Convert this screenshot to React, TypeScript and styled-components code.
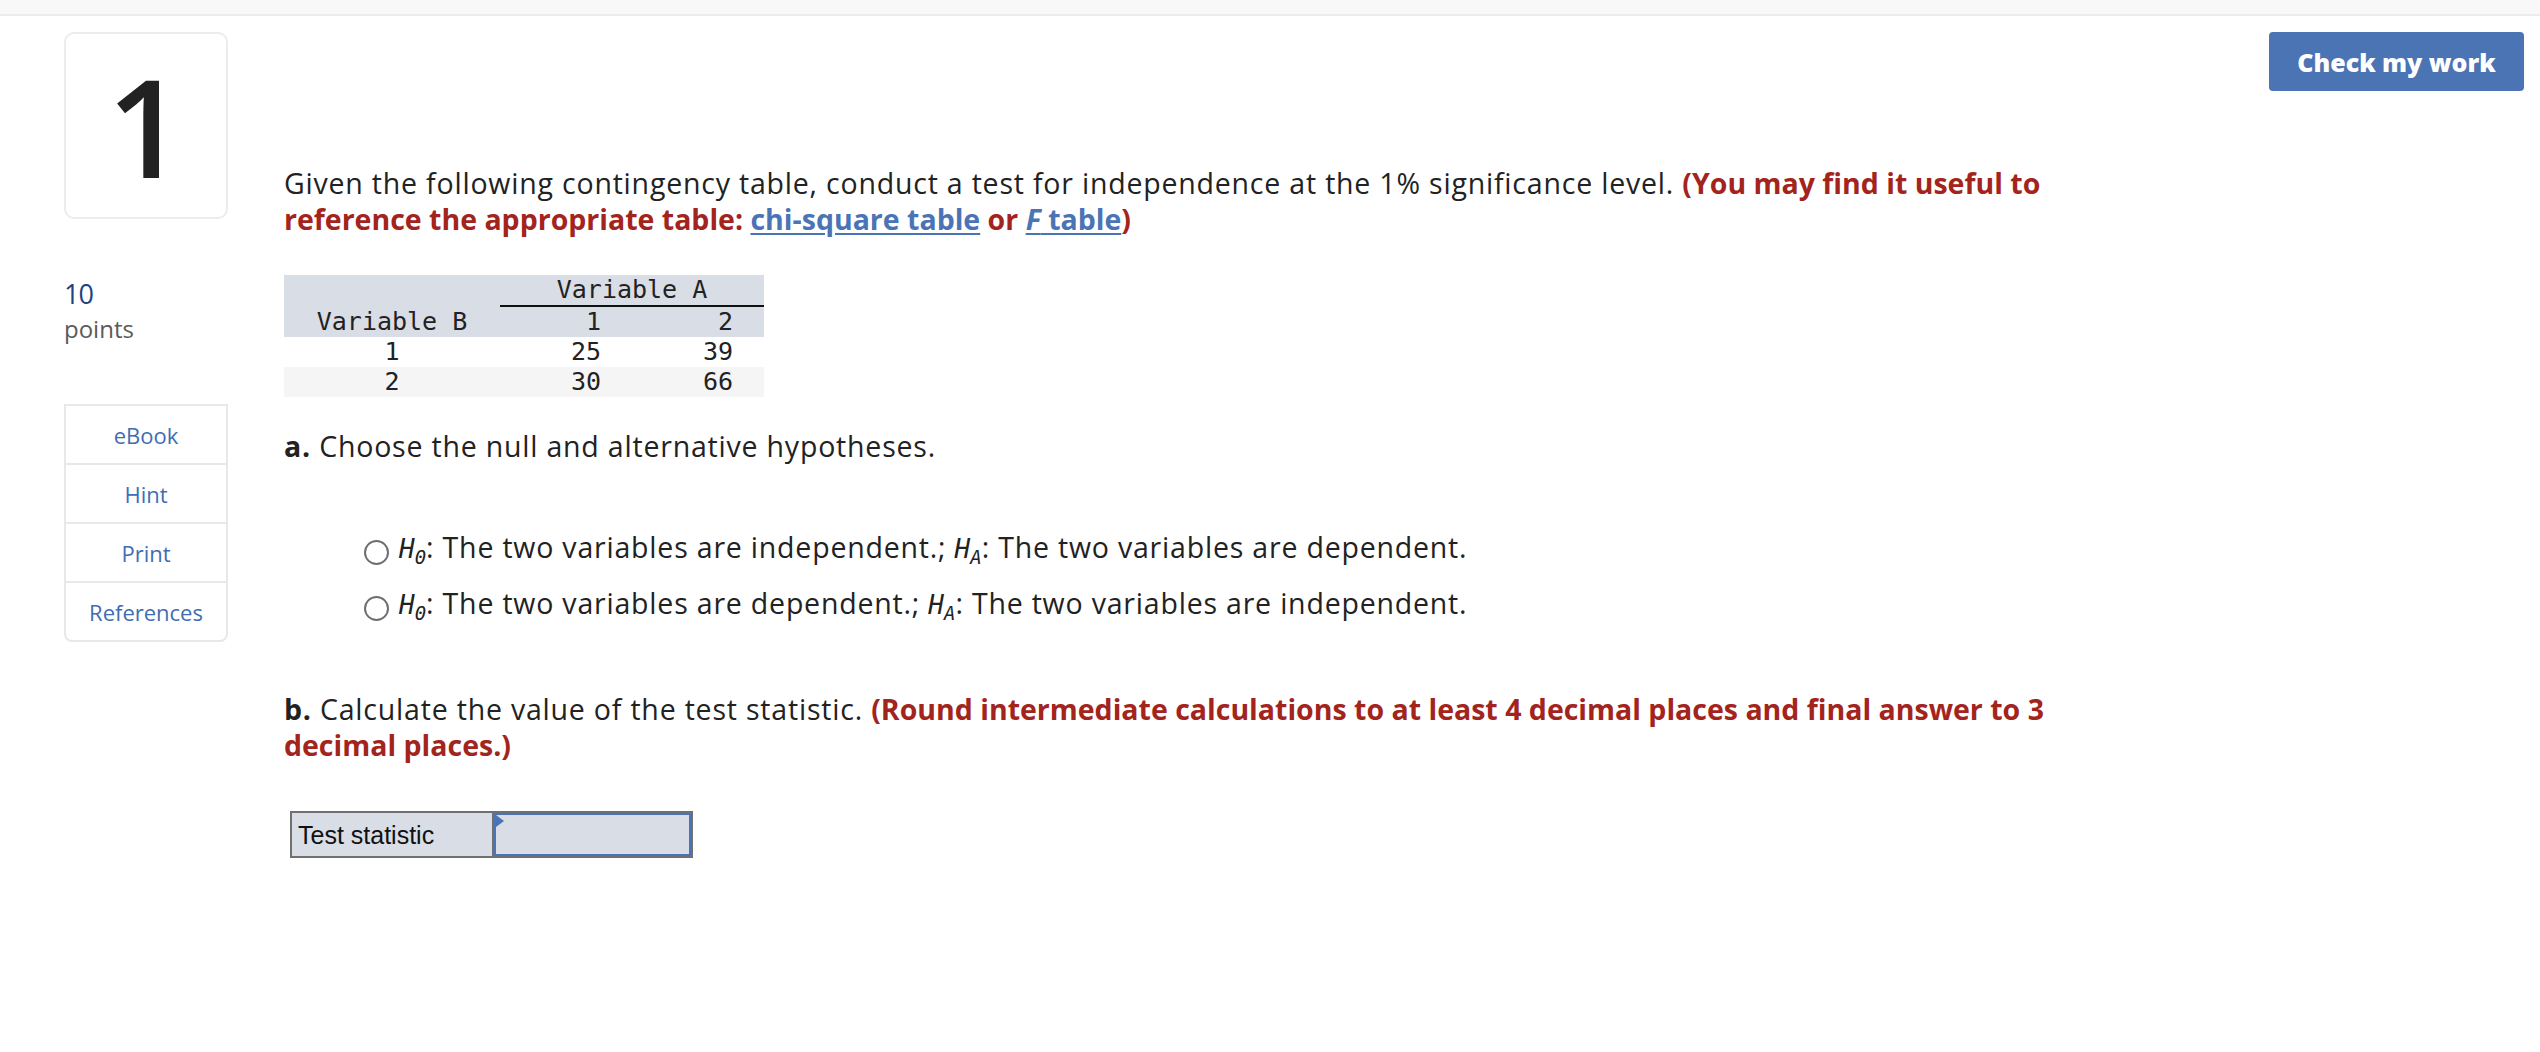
import React from 'react';
import styled, { createGlobalStyle } from 'styled-components';

const GlobalStyle = createGlobalStyle`
  body {
    margin: 0;
    background: #fff;
    font-family: "Open Sans", "Noto Sans", sans-serif;
    color: #222;
  }
`;

const TopBar = styled.div`
  height: 14px;
  background: #f8f8f8;
  border-bottom: 2px solid #ececec;
`;

const Page = styled.div`
  display: flex;
  align-items: flex-start;
  padding: 16px 16px 120px 64px;
`;

const LeftCol = styled.div`
  width: 164px;
  flex: none;
  display: flex;
  flex-direction: column;
`;

const NumberBox = styled.div`
  height: 183px;
  border: 2px solid #ececec;
  border-radius: 10px;
  display: flex;
  align-items: center;
  justify-content: center;
  font-size: 136px;
  font-weight: 600;
  color: #222;
  line-height: 1;
`;

const Points = styled.div`
  margin-top: 58px;
  display: flex;
  flex-direction: column;
`;

const PointValue = styled.span`
  font-size: 27px;
  color: #1d4383;
  line-height: 34px;
  letter-spacing: -1px;
`;

const PointLabel = styled.span`
  font-size: 24px;
  color: #5b5b5b;
  line-height: 36px;
`;

const ToolBox = styled.div`
  margin-top: 57px;
  border: 2px solid #e8e8e8;
  border-radius: 0 0 8px 8px;
  display: flex;
  flex-direction: column;
`;

const ToolLink = styled.a<{ $last?: boolean }>`
  height: 57px;
  display: flex;
  align-items: center;
  justify-content: center;
  font-size: 22px;
  color: #3f6db3;
  text-decoration: none;
  border-bottom: ${({ $last }) => ($last ? 'none' : '2px solid #e8e8e8')};
`;

const Main = styled.div`
  flex: 0 1 1780px;
  margin-left: 56px;
  padding-top: 133px;
  font-size: 28.5px;
  letter-spacing: 0.8px;
  line-height: 36px;
`;

const Para = styled.p`
  margin: 0;
`;

const Red = styled.b`
  color: #a3241c;
  font-weight: 700;
  letter-spacing: 0;
`;

const TableLink = styled.a`
  color: #4a74b6;
  text-decoration: underline;
  text-underline-offset: 3px;
`;

const Contingency = styled.table`
  margin-top: 38px;
  border-collapse: collapse;
  font-family: "DejaVu Sans Mono", monospace;
  font-size: 25px;
  letter-spacing: 0;
  line-height: 30px;
  color: #222;
`;

const HeadRow = styled.tr`
  background: #d9dde6;
`;

const BodyRow = styled.tr<{ $shade?: boolean }>`
  background: ${({ $shade }) => ($shade ? '#f5f5f5' : '#fff')};
`;

const Cell = styled.td<{ $w?: number; $right?: boolean; $rule?: boolean }>`
  padding: 0;
  width: ${({ $w }) => ($w ? `${$w}px` : 'auto')};
  text-align: ${({ $right }) => ($right ? 'right' : 'center')};
  padding-right: ${({ $right }) => ($right ? '31px' : '0')};
  border-bottom: ${({ $rule }) => ($rule ? '2px solid #111' : 'none')};
  vertical-align: bottom;
`;

const PartLabel = styled.p<{ $top: number }>`
  margin: ${({ $top }) => `${$top}px`} 0 0;
`;

const Options = styled.div`
  margin-top: 65px;
  margin-left: 80px;
  display: flex;
  flex-direction: column;
  gap: 10px;
`;

const Option = styled.label`
  display: flex;
  align-items: center;
  gap: 10px;
`;

const Radio = styled.span`
  width: 21px;
  height: 21px;
  border: 2px solid #6f6f6f;
  border-radius: 50%;
  flex: none;
`;

const Hyp = styled.span`
  font-family: "DejaVu Sans Mono", monospace;
  font-style: italic;
  font-size: 26px;
  letter-spacing: 0;
`;

const Sub = styled.sub`
  font-size: 19px;
  vertical-align: -6px;
`;

const AnswerTable = styled.div`
  margin-top: 48px;
  margin-left: 6px;
  display: inline-flex;
  border: 2px solid #707070;
  background: #d9dde6;
  font-family: "Liberation Sans", Arial, sans-serif;
  font-size: 25px;
  letter-spacing: 0;
`;

const AnswerLabel = styled.div`
  width: 194px;
  height: 43px;
  padding-left: 6px;
  display: flex;
  align-items: center;
  border-right: 2px solid #707070;
  color: #111;
`;

const AnswerInput = styled.div`
  position: relative;
  width: 197px;
  height: 43px;
  box-sizing: border-box;
  border: 2px solid #4a74b6;
`;

const Flag = styled.span`
  position: absolute;
  left: 0;
  top: 0;
  width: 0;
  height: 0;
  border-top: 6px solid transparent;
  border-bottom: 6px solid transparent;
  border-left: 8px solid #4a74b6;
`;

const CheckButton = styled.button`
  margin-left: auto;
  width: 255px;
  height: 59px;
  background: #4a74b4;
  color: #fff;
  border: none;
  border-radius: 4px;
  font-family: "Open Sans", "Noto Sans", sans-serif;
  font-weight: 800;
  font-size: 25px;
  flex: none;
`;

const hypotheses = [
  ['independent.', 'dependent.'],
  ['dependent.', 'independent.'],
];

export default function App() {
  return (
    <>
      <GlobalStyle />
      <TopBar />
      <Page>
        <LeftCol>
          <NumberBox>1</NumberBox>
          <Points>
            <PointValue>10</PointValue>
            <PointLabel>points</PointLabel>
          </Points>
          <ToolBox>
            <ToolLink>eBook</ToolLink>
            <ToolLink>Hint</ToolLink>
            <ToolLink>Print</ToolLink>
            <ToolLink $last>References</ToolLink>
          </ToolBox>
        </LeftCol>

        <Main>
          <Para>
            Given the following contingency table, conduct a test for independence at the 1% significance level.{' '}
            <Red>
              (You may find it useful to reference the appropriate table:{' '}
              <TableLink>chi-square table</TableLink> or <TableLink><i>F</i> table</TableLink>)
            </Red>
          </Para>

          <Contingency>
            <tbody>
              <HeadRow>
                <Cell $w={216}></Cell>
                <Cell colSpan={2} $rule>Variable A</Cell>
              </HeadRow>
              <HeadRow>
                <Cell>Variable B</Cell>
                <Cell $w={101} $right>1</Cell>
                <Cell $w={101} $right>2</Cell>
              </HeadRow>
              <BodyRow>
                <Cell>1</Cell>
                <Cell $right>25</Cell>
                <Cell $right>39</Cell>
              </BodyRow>
              <BodyRow $shade>
                <Cell>2</Cell>
                <Cell $right>30</Cell>
                <Cell $right>66</Cell>
              </BodyRow>
            </tbody>
          </Contingency>

          <PartLabel $top={31}>
            <b>a.</b> Choose the null and alternative hypotheses.
          </PartLabel>

          <Options>
            {hypotheses.map(([h0, ha], i) => (
              <Option key={i}>
                <Radio />
                <span>
                  <Hyp>H<Sub>0</Sub></Hyp>: The two variables are {h0}; <Hyp>H<Sub>A</Sub></Hyp>: The two variables are {ha}
                </span>
              </Option>
            ))}
          </Options>

          <PartLabel $top={60}>
            <b>b.</b> Calculate the value of the test statistic.{' '}
            <Red>(Round intermediate calculations to at least 4 decimal places and final answer to 3 decimal places.)</Red>
          </PartLabel>

          <AnswerTable>
            <AnswerLabel>Test statistic</AnswerLabel>
            <AnswerInput>
              <Flag />
            </AnswerInput>
          </AnswerTable>
        </Main>

        <CheckButton>Check my work</CheckButton>
      </Page>
    </>
  );
}
